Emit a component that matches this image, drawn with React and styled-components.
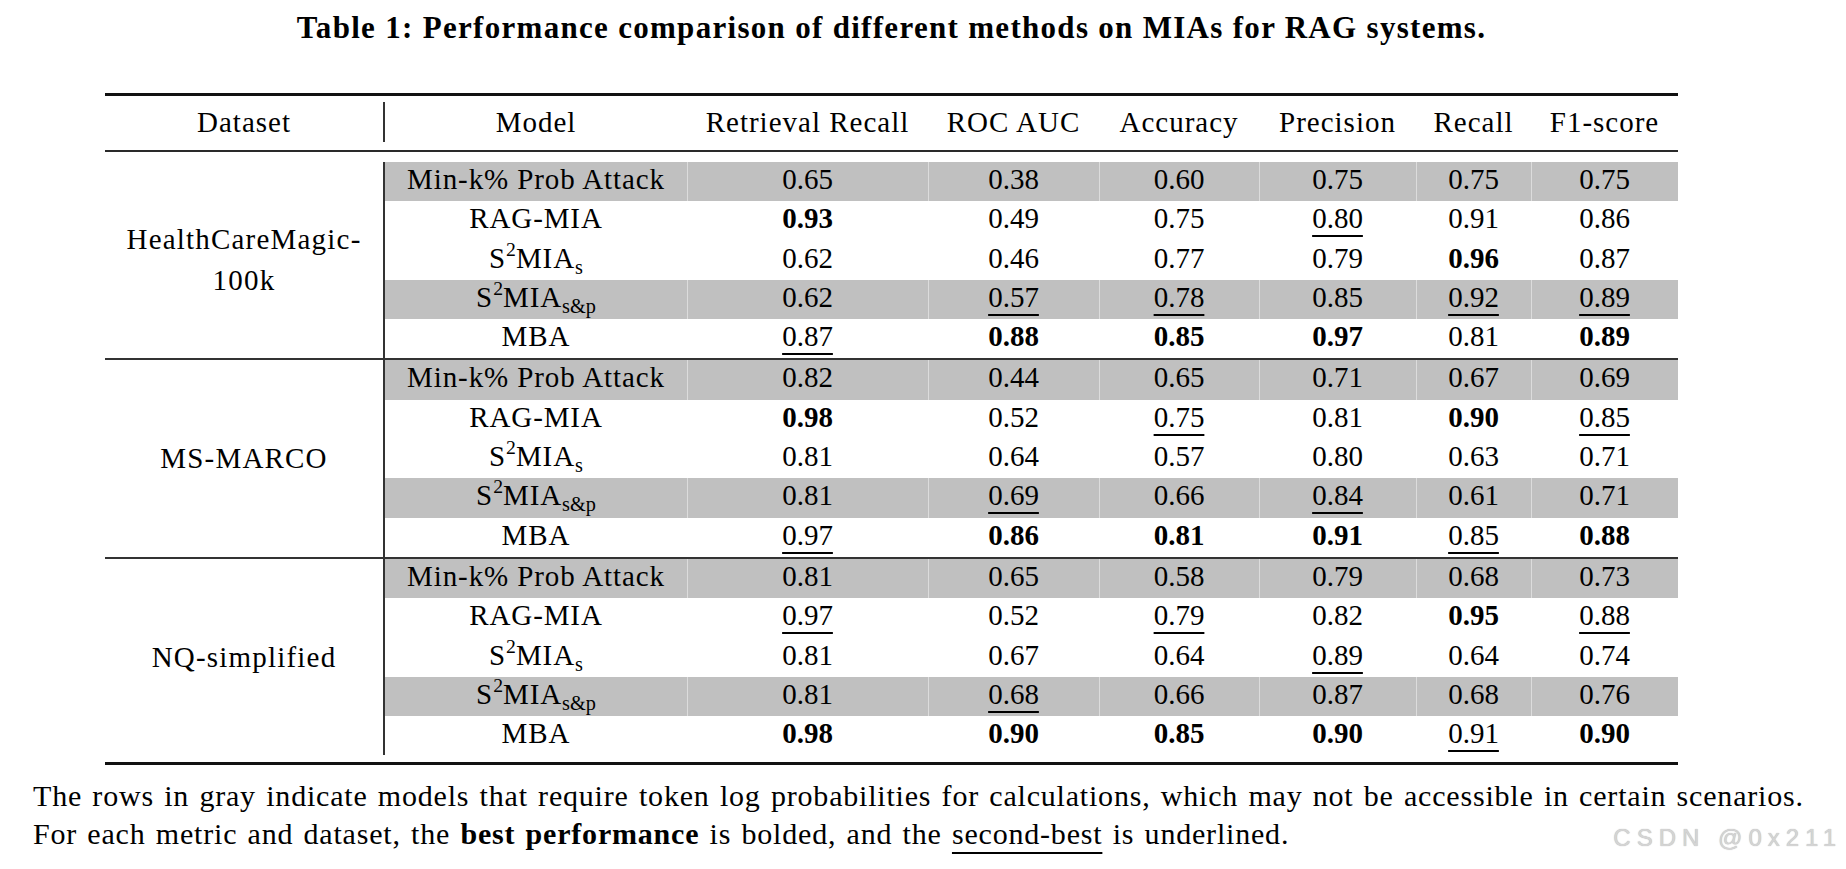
import React from 'react';
import styled, { createGlobalStyle } from 'styled-components';

const GlobalStyle = createGlobalStyle`
  html, body {
    margin: 0;
    padding: 0;
    background: #fff;
  }
  body {
    font-family: "Liberation Serif", "Times New Roman", serif;
    color: #000;
  }
`;

const Page = styled.div`
  position: relative;
  width: 1846px;
  height: 869px;
  overflow: hidden;
  box-sizing: border-box;
  padding: 8px 0 0 33px;
`;

const Figure = styled.div`
  width: 1573px;
  margin-left: 72px;
`;

const Caption = styled.div`
  font-weight: bold;
  font-size: 31px;
  line-height: 40px;
  text-align: center;
  letter-spacing: 1.3px;
`;

const Table = styled.div`
  margin-top: 45px;
  border-top: 3px solid #111;
  border-bottom: 3px solid #111;
  font-size: 29px;
`;

const HeadRow = styled.div`
  display: grid;
  grid-template-columns: 280px 302px 241px 171px 160px 157px 115px 147px;
  padding: 6px 0 8px;
  border-bottom: 2px solid #2a2a2a;
`;

const HeadCell = styled.div`
  height: 40px;
  line-height: 40px;
  text-align: center;
  letter-spacing: 1px;
  white-space: nowrap;
  box-sizing: border-box;
  border-right: ${(p) => (p.$divider ? '2px solid #333' : 'none')};
`;

const Body = styled.div`
  padding: 10px 0 7px;
`;

const Section = styled.div`
  display: flex;
  border-top: ${(p) => (p.$first ? 'none' : '2px solid #333')};
`;

const DatasetCell = styled.div`
  width: 278px;
  display: flex;
  align-items: center;
  justify-content: center;
  text-align: center;
  line-height: 41px;
  letter-spacing: 1.2px;
`;

const Rows = styled.div`
  width: 1293px;
  border-left: 2px solid #333;
`;

const Row = styled.div`
  display: grid;
  grid-template-columns: 302px 241px 171px 160px 157px 115px 147px;
  height: 39.3px;
  background: ${(p) => (p.$gray ? '#c0c0c0' : '#fff')};
`;

const Cell = styled.div`
  line-height: 35px;
  text-align: center;
  white-space: nowrap;
  box-shadow: ${(p) => (p.$sep ? 'inset 1px 0 0 #dcdcdc' : 'none')};
`;

const ModelName = styled.span`
  letter-spacing: 0.9px;
`;

const Sup = styled.sup`
  font-size: 0.68em;
  line-height: 0;
  vertical-align: 0.62em;
  letter-spacing: 0;
`;

const Sub = styled.sub`
  font-size: 0.7em;
  line-height: 0;
  vertical-align: -0.28em;
  letter-spacing: 0;
`;

const Value = styled.span`
  font-weight: ${(p) => (p.$bold ? 'bold' : 'normal')};
  text-decoration: ${(p) => (p.$under ? 'underline' : 'none')};
  text-decoration-thickness: 1.5px;
  text-underline-offset: 7px;
  text-decoration-skip-ink: none;
`;

const Note = styled.div`
  margin-top: 12px;
  font-size: 30px;
  line-height: 38px;
  letter-spacing: 0.8px;
  word-spacing: 2px;
  white-space: nowrap;
`;

const Strong = styled.b`
  font-weight: bold;
`;

const Under = styled.span`
  text-decoration: underline;
  text-decoration-thickness: 1.5px;
  text-underline-offset: 8px;
  text-decoration-skip-ink: none;
`;

const Watermark = styled.div`
  position: absolute;
  right: 4px;
  bottom: 17px;
  font-family: "Liberation Sans", Arial, sans-serif;
  font-size: 24px;
  letter-spacing: 6px;
  color: #d4d4d4;
  text-shadow: 0 0 1px #aaa;
`;

const headers = ['Dataset', 'Model', 'Retrieval Recall', 'ROC AUC', 'Accuracy', 'Precision', 'Recall', 'F1-score'];

const models = [
  { key: 'mink', gray: true, name: <ModelName>Min-k% Prob Attack</ModelName> },
  { key: 'rag', gray: false, name: <ModelName>RAG-MIA</ModelName> },
  { key: 's2s', gray: false, name: <ModelName>S<Sup>2</Sup>MIA<Sub>s</Sub></ModelName> },
  { key: 's2sp', gray: true, name: <ModelName>S<Sup>2</Sup>MIA<Sub>s&amp;p</Sub></ModelName> },
  { key: 'mba', gray: false, name: <ModelName>MBA</ModelName> },
];

// "*" = best (bold), "_" = second-best (underlined)
const sections = [
  {
    name: <>HealthCareMagic-<br />100k</>,
    rows: [
      ['0.65', '0.38', '0.60', '0.75', '0.75', '0.75'],
      ['*0.93', '0.49', '0.75', '_0.80', '0.91', '0.86'],
      ['0.62', '0.46', '0.77', '0.79', '*0.96', '0.87'],
      ['0.62', '_0.57', '_0.78', '0.85', '_0.92', '_0.89'],
      ['_0.87', '*0.88', '*0.85', '*0.97', '0.81', '*0.89'],
    ],
  },
  {
    name: 'MS-MARCO',
    rows: [
      ['0.82', '0.44', '0.65', '0.71', '0.67', '0.69'],
      ['*0.98', '0.52', '_0.75', '0.81', '*0.90', '_0.85'],
      ['0.81', '0.64', '0.57', '0.80', '0.63', '0.71'],
      ['0.81', '_0.69', '0.66', '_0.84', '0.61', '0.71'],
      ['_0.97', '*0.86', '*0.81', '*0.91', '_0.85', '*0.88'],
    ],
  },
  {
    name: 'NQ-simplified',
    rows: [
      ['0.81', '0.65', '0.58', '0.79', '0.68', '0.73'],
      ['_0.97', '0.52', '_0.79', '0.82', '*0.95', '_0.88'],
      ['0.81', '0.67', '0.64', '_0.89', '0.64', '0.74'],
      ['0.81', '_0.68', '0.66', '0.87', '0.68', '0.76'],
      ['*0.98', '*0.90', '*0.85', '*0.90', '_0.91', '*0.90'],
    ],
  },
];

const renderValue = (raw) => {
  const bold = raw[0] === '*';
  const under = raw[0] === '_';
  const text = bold || under ? raw.slice(1) : raw;
  return <Value $bold={bold} $under={under}>{text}</Value>;
};

const App = () => {
  return (
    <Page>
      <GlobalStyle />
      <Figure>
        <Caption>Table 1: Performance comparison of different methods on MIAs for RAG systems.</Caption>
        <Table>
          <HeadRow>
            {headers.map((h, i) => (
              <HeadCell key={h} $divider={i === 0}>{h}</HeadCell>
            ))}
          </HeadRow>
          <Body>
            {sections.map((s, si) => (
              <Section key={si} $first={si === 0}>
                <DatasetCell>{s.name}</DatasetCell>
                <Rows>
                  {s.rows.map((vals, ri) => (
                    <Row key={models[ri].key} $gray={models[ri].gray}>
                      <Cell>{models[ri].name}</Cell>
                      {vals.map((v, ci) => (
                        <Cell key={ci} $sep={models[ri].gray}>{renderValue(v)}</Cell>
                      ))}
                    </Row>
                  ))}
                </Rows>
              </Section>
            ))}
          </Body>
        </Table>
      </Figure>
      <Note>
        The rows in gray indicate models that require token log probabilities for calculations, which may not be accessible in certain scenarios.
        <br />
        For each metric and dataset, the <Strong>best performance</Strong> is bolded, and the <Under>second-best</Under> is underlined.
      </Note>
      <Watermark>CSDN @0x211</Watermark>
    </Page>
  );
};

export default App;
